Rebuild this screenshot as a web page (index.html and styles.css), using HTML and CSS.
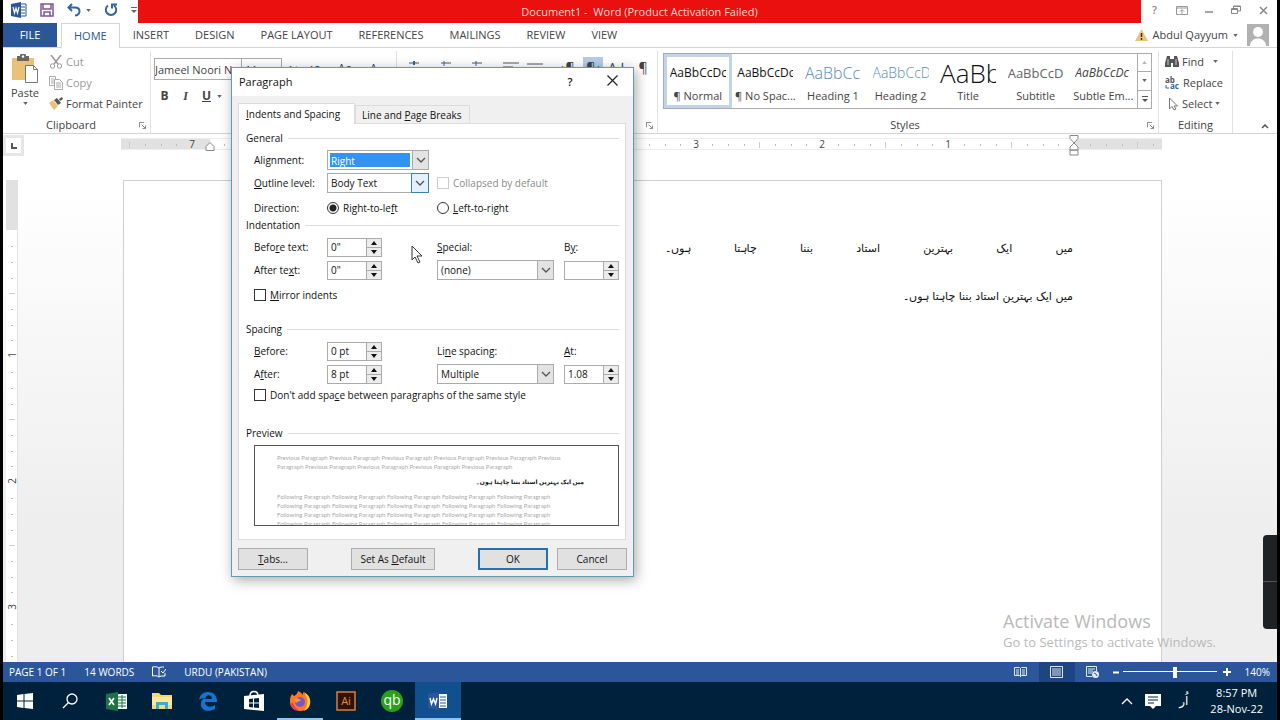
FILE: index.html
```html
<!DOCTYPE html>
<html lang="en">
<head>
  <meta charset="UTF-8">
  <title>Document1 - Word</title>
  <link rel="stylesheet" href="styles.css">
</head>
<body>

  <!-- shared icons -->
  <svg class="defs" width="0" height="0">
    <symbol id="caret" viewBox="0 0 6 4"><path d="M0 0h6L3 4z" fill="#666"/></symbol>
    <symbol id="chevron" viewBox="0 0 10 6"><path d="M1 1l4 4 4-4" fill="none" stroke="#555" stroke-width="1.3"/></symbol>
    <symbol id="launcher" viewBox="0 0 8 8"><path d="M.5 6V.5H6M3 3l4 4M7.500 4v3.500H4" fill="none" stroke="#777"/></symbol>
    <symbol id="up" viewBox="0 0 6 4"><path d="M0 4h6L3 0z" fill="#111"/></symbol>
    <symbol id="down" viewBox="0 0 6 4"><path d="M0 0h6L3 4z" fill="#111"/></symbol>
    <symbol id="ticks" viewBox="0 0 126 12"><path d="M16 6h1M32 6h1M48 6h1M79 6h1M95 6h1M110 6h1" stroke="#bbb" stroke-width="2"/><path d="M63.500 3v6" stroke="#ccc"/></symbol>
  </svg>

  <!-- TITLE BAR -->
  <header class="titlebar">
    <div class="quick">
      <svg width="16" height="16" viewBox="0 0 16 16"><path d="M9 2h6v12H9z" fill="#fff" stroke="#2b579a"/><path d="M10 5h4M10 8h4M10 11h4" stroke="#2b579a"/><path d="M0 2l10-2v16L0 14z" fill="#2b579a"/><path d="M2 5l1.500 6L5 6l1.500 5L8 5" fill="none" stroke="#fff" stroke-width="1.200"/></svg>
      <button aria-label="Save"><svg width="14" height="14" viewBox="0 0 14 14"><path d="M1 1h12v12H1zM3 1v5h8V1M4 13V9h6v4" fill="none" stroke="#80559b" stroke-width="1.500"/></svg></button>
      <button aria-label="Undo"><svg width="14" height="14" viewBox="0 0 14 14"><path d="M5 1L1.500 4.500 5 8M2 4.500h6c6 0 6 7 0 8" fill="none" stroke="#31669f" stroke-width="2"/></svg><svg width="5" height="3"><use href="#caret"/></svg></button>
      <button aria-label="Redo"><svg width="14" height="14" viewBox="0 0 14 14"><path d="M4 2.500a5.200 5.200 0 1 0 6 0M8 5.500V1.500h5" fill="none" stroke="#31669f" stroke-width="2"/></svg></button>
      <button aria-label="Customize"><svg width="6" height="7" viewBox="0 0 6 7"><path d="M0 .5h6" stroke="#666"/><path d="M0 3h6L3 6z" fill="#666"/></svg></button>
    </div>
    <div class="doc-title">Document1 -&nbsp; Word (Product Activation Failed)</div>
    <div class="win-buttons">
      <button aria-label="Help">?</button>
      <button aria-label="Ribbon display"><svg width="12" height="9" viewBox="0 0 12 9"><path d="M.5.5h11v8H.5zM.5 2h11M6 8V4M4 5.500l2-2 2 2" fill="none" stroke="#999"/></svg></button>
      <button aria-label="Minimize"><svg width="8" height="9" viewBox="0 0 8 9"><path d="M0 6h8" stroke="#888" stroke-width="1.500"/></svg></button>
      <button aria-label="Restore"><svg width="10" height="10" viewBox="0 0 10 10"><path d="M.5 3.500h6v5h-6zM.5 4.500h6M2.500 3V1h7v5H7M3 1.500h6" fill="none" stroke="#888"/></svg></button>
      <button aria-label="Close"><svg width="9" height="9" viewBox="0 0 9 9"><path d="M1 1l7 7M8 1L1 8" stroke="#888" stroke-width="1.500"/></svg></button>
    </div>
  </header>

  <!-- TABS -->
  <nav class="tabs">
    <button class="tab file">FILE</button>
    <button class="tab active">HOME</button>
    <button class="tab">INSERT</button>
    <button class="tab">DESIGN</button>
    <button class="tab">PAGE LAYOUT</button>
    <button class="tab">REFERENCES</button>
    <button class="tab">MAILINGS</button>
    <button class="tab">REVIEW</button>
    <button class="tab">VIEW</button>
    <div class="account">
      <svg width="13" height="12" viewBox="0 0 13 12"><path d="M6.500 0L13 12H0z" fill="#efc27a"/><path d="M6.500 4v4M6.500 9v2" stroke="#333" stroke-width="1.500"/></svg>
      <span>Abdul Qayyum</span>
      <svg width="5" height="3"><use href="#caret"/></svg>
      <svg class="avatar" width="22" height="22" viewBox="0 0 22 22"><path d="M0 0h22v22H0z" fill="#b1b1b1"/><circle cx="11" cy="8" r="5" fill="#fff"/><path d="M3 22c0-10 16-10 16 0z" fill="#fff"/></svg>
    </div>
  </nav>

  <!-- RIBBON -->
  <section class="ribbon">
    <div class="group clipboard">
      <div class="group-body">
        <button class="paste">
          <svg width="28" height="30" viewBox="0 0 28 30"><path d="M1 4h22v22H1z" fill="#ebc175"/><path d="M6 2h3a3 3 0 0 1 6 0h3v5H6z" fill="#666"/><circle cx="12" cy="2.500" r="1.200" fill="#fff"/><path d="M14.500 11.500h8l4 4v13h-12zM22.500 11.500v4h4" fill="#fff" stroke="#777"/></svg>
          <span>Paste</span>
          <svg width="5" height="3"><use href="#caret"/></svg>
        </button>
        <div class="stack">
          <button class="cmd off"><svg width="14" height="14" viewBox="0 0 14 14"><path d="M2 0l7 9M12 0L5 9" stroke="#999" stroke-width="1.500"/><circle cx="3.500" cy="11" r="2.200" fill="none" stroke="#999"/><circle cx="10.500" cy="11" r="2.200" fill="none" stroke="#999"/></svg>Cut</button>
          <button class="cmd off"><svg width="14" height="14" viewBox="0 0 14 14"><path d="M.5.5h6v9h-6zM2 3h3M2 5h3M2 7h3" fill="#fff" stroke="#aaa"/><path d="M5.500 3.500h5l3 3v7h-8zM7 7h5M7 9h5M7 11h5" fill="#fff" stroke="#aaa"/></svg>Copy</button>
          <button class="cmd"><svg width="14" height="14" viewBox="0 0 14 14"><path d="M0 6l4-3 5 6-4 4z" fill="#ebc175"/><path d="M5 3l3-2 4 5-3 2zM10 2l3-2 1 2-3 2z" fill="#555"/></svg>Format Painter</button>
        </div>
      </div>
      <div class="group-name"><span>Clipboard</span><button aria-label="Clipboard options"><svg width="7" height="7"><use href="#launcher"/></svg></button></div>
    </div>

    <div class="group font">
      <div class="group-body column">
        <div class="tools">
          <input class="font-name" aria-label="Font" value="Jameel Noori Nastaleeq">
          <input class="font-size" aria-label="Font size" value="11">
          <button class="t">A<sup>▴</sup></button><button class="t">A<sup>▾</sup></button><button class="t wide">Aa</button><button class="t">A<i class="rubber">◆</i></button>
        </div>
        <div class="tools">
          <button class="t"><b>B</b></button><button class="t"><i class="serif">I</i></button><button class="t"><b><u>U</u></b></button><svg width="5" height="3"><use href="#caret"/></svg>
        </div>
      </div>
    </div>

    <div class="group para">
      <div class="group-body">
        <svg width="126" height="22" viewBox="0 0 126 22"><path d="M12 6h10M44 6h10M75 6h10M6 11h16M38 11h16M70 11h16M106 6h16M106 10h10M106 14h16" stroke="#555"/><path d="M16 4h2v4h-2z" fill="#31669f"/><path d="M47 4v5M79 4v5" stroke="#31669f"/></svg>
        <svg width="30" height="22" viewBox="0 0 30 22"><path d="M4 7h16M4 11h10M4 15h16" stroke="#555"/></svg>
        <span class="mark">›¶</span><span class="mark on">¶‹</span><span class="mark">A↓</span><span class="mark">¶</span>
      </div>
      <div class="group-name"><span></span><button aria-label="Paragraph options"><svg width="7" height="7"><use href="#launcher"/></svg></button></div>
    </div>

    <div class="group styles">
      <div class="gallery">
        <button class="style chosen"><span class="sample">AaBbCcDc</span><span>¶ Normal</span></button>
        <button class="style"><span class="sample">AaBbCcDc</span><span>¶ No Spac...</span></button>
        <button class="style"><span class="sample h1">AaBbCc</span><span>Heading 1</span></button>
        <button class="style"><span class="sample h2">AaBbCcD</span><span>Heading 2</span></button>
        <button class="style"><span class="sample big">AaBb</span><span>Title</span></button>
        <button class="style"><span class="sample sub">AaBbCcD</span><span>Subtitle</span></button>
        <button class="style"><span class="sample em">AaBbCcDc</span><span>Subtle Em...</span></button>
        <div class="scroll">
          <button aria-label="Row up" disabled><svg width="5" height="3"><use href="#up"/></svg></button>
          <button aria-label="Row down"><svg width="5" height="3"><use href="#caret"/></svg></button>
          <button aria-label="More styles"><svg width="6" height="7" viewBox="0 0 6 7"><path d="M0 .5h6" stroke="#555"/><path d="M0 3h6L3 6z" fill="#555"/></svg></button>
        </div>
      </div>
      <div class="group-name"><span>Styles</span><button aria-label="Styles options"><svg width="7" height="7"><use href="#launcher"/></svg></button></div>
    </div>

    <div class="group editing">
      <div class="group-body">
        <div class="stack">
          <button class="cmd"><svg width="14" height="13" viewBox="0 0 14 13"><path d="M2 1h3v3h4V1h3l2 7v4H8V8H6v4H0V8z" fill="#555"/><path d="M3 4v6M11 4v6" stroke="#ccc"/></svg>Find<svg class="gap" width="5" height="3"><use href="#caret"/></svg></button>
          <button class="cmd"><svg width="15" height="14" viewBox="0 0 15 14"><text x="0" y="7" font-size="8" font-weight="700" fill="#555">ab</text><text x="5" y="13" font-size="8" font-weight="700" fill="#31669f">ac</text><path d="M1 9v3h3" fill="none" stroke="#31669f"/></svg>Replace</button>
          <button class="cmd"><svg width="14" height="14" viewBox="0 0 14 14"><path d="M4.500 1v11l2.500-2.500L9 13l2-1-2-3h3.500z" fill="#fff" stroke="#777"/></svg>Select<svg width="5" height="3"><use href="#caret"/></svg></button>
        </div>
      </div>
      <div class="group-name"><span>Editing</span></div>
    </div>
    <button class="collapse" aria-label="Collapse ribbon"><svg width="8" height="5" viewBox="0 0 8 5"><path d="M1 4l3-3 3 3" fill="none" stroke="#555" stroke-width="1.500"/></svg></button>
  </section>

  <!-- DOCUMENT -->
  <main class="workspace">
    <div class="ruler-row">
      <button class="tab-stop" aria-label="Tab stop"><svg width="6" height="6" viewBox="0 0 6 6"><path d="M1 0v5h5" fill="none" stroke="#555" stroke-width="2"/></svg></button>
      <div class="ruler">
        <div class="cap"><svg width="126" height="12"><use href="#ticks"/></svg></div>
        <svg width="126" height="12"><use href="#ticks"/><text x="0" y="9">1</text></svg>
        <svg width="126" height="12"><use href="#ticks"/><text x="0" y="9">2</text></svg>
        <svg width="126" height="12"><use href="#ticks"/><text x="0" y="9">3</text></svg>
        <svg width="126" height="12"><use href="#ticks"/><text x="0" y="9">4</text></svg>
        <svg width="126" height="12"><use href="#ticks"/><text x="0" y="9">5</text></svg>
        <svg width="126" height="12"><use href="#ticks"/><text x="0" y="9">6</text></svg>
        <svg width="126" height="12"><use href="#ticks"/><text x="0" y="9">7</text></svg>
        <div class="rest"><svg width="126" height="12"><use href="#ticks"/></svg></div>
        <svg class="marker left" width="10" height="9" viewBox="0 0 10 9"><path d="M5 .5l4 4v4H1v-4z" fill="#fff" stroke="#888"/></svg>
        <svg class="marker right" width="10" height="21" viewBox="0 0 10 21"><path d="M1 .5h8v3L5 8 1 3.500zM5 8l4 4v3H1v-3zM1 15h8v5H1z" fill="#fff" stroke="#888"/></svg>
      </div>
    </div>
    <div class="canvas">
      <div class="v-ruler">
        <div class="v-cap"></div>
        <svg width="12" height="126" viewBox="0 0 12 126"><use href="#ticks" width="126" height="12" transform="rotate(90) translate(0 -12)"/><text transform="translate(10 125) rotate(-90)">1</text></svg>
        <svg width="12" height="126" viewBox="0 0 12 126"><use href="#ticks" width="126" height="12" transform="rotate(90) translate(0 -12)"/><text transform="translate(10 125) rotate(-90)">2</text></svg>
        <svg width="12" height="126" viewBox="0 0 12 126"><use href="#ticks" width="126" height="12" transform="rotate(90) translate(0 -12)"/><text transform="translate(10 125) rotate(-90)">3</text></svg>
        <svg width="12" height="126" viewBox="0 0 12 126"><use href="#ticks" width="126" height="12" transform="rotate(90) translate(0 -12)"/></svg>
      </div>
      <article class="page" lang="ur" dir="rtl">
        <p class="spread"><span>میں</span> <span>ایک</span> <span>بہترین</span> <span>استاد</span> <span>بننا</span> <span>چاہتا</span> <span>ہوں۔</span></p>
        <p>میں ایک بہترین استاد بننا چاہتا ہوں۔</p>
      </article>
    </div>
    <div class="watermark"><strong>Activate Windows</strong><span>Go to Settings to activate Windows.</span></div>
    <div class="side-handle"></div>
  </main>

  <!-- STATUS BAR -->
  <footer class="status">
    <span>PAGE 1 OF 1</span>
    <span>14 WORDS</span>
    <svg width="14" height="12" viewBox="0 0 14 12"><path d="M7 2C5 .5 3 .5.500 1v9c2.500-.5 4.500-.5 6.500 1V2c1-1 3-1 5-1M7 11c1-1 3-1 6-1V7M9 5l2 2 3-4" fill="none" stroke="#fff"/></svg>
    <span>URDU (PAKISTAN)</span>
    <div class="views">
      <button aria-label="Read mode"><svg width="13" height="12" viewBox="0 0 13 12"><path d="M.5 1.500h5l1 1 1-1h5v8h-5l-1 1-1-1h-5zM6.500 2v9M2 4h3M2 6h3M2 8h3M8 4h3M8 6h3M8 8h3" fill="none" stroke="#dfe8f5"/></svg></button>
      <button class="on" aria-label="Print layout"><svg width="13" height="12" viewBox="0 0 13 12"><path d="M.5.5h12v11H.5zM2 3h9M2 5h9M2 7h9M2 9h9" fill="none" stroke="#dfe8f5"/></svg></button>
      <button aria-label="Web layout"><svg width="13" height="12" viewBox="0 0 13 12"><path d="M6 10.500H.5V.5h10V5M2 3h7M2 5h5M2 7h4" fill="none" stroke="#dfe8f5"/><circle cx="9.500" cy="8.500" r="3.500" fill="#dfe8f5"/><path d="M8 7l2 1 1 2" stroke="#2b579a" fill="none"/></svg></button>
    </div>
    <div class="zoom">
      <button aria-label="Zoom out"><svg width="7" height="7" viewBox="0 0 7 7"><path d="M0 3.500h6" stroke="#fff" stroke-width="2"/></svg></button>
      <input type="range" aria-label="Zoom" min="0" max="100" value="56">
      <button aria-label="Zoom in"><svg width="8" height="8" viewBox="0 0 8 8"><path d="M0 4h8M4 0v8" stroke="#fff" stroke-width="2"/></svg></button>
      <span>140%</span>
    </div>
  </footer>

  <!-- TASKBAR -->
  <div class="taskbar">
    <button aria-label="Start"><svg width="16" height="16" viewBox="0 0 16 16"><path d="M0 2l6.500-1v6.500H0zM7.500 1L16 0v7.500H7.500zM0 8.500h6.500V15L0 14zM7.500 8.500H16V16l-8.500-1z" fill="#fff"/></svg></button>
    <button aria-label="Search"><svg width="16" height="16" viewBox="0 0 16 16"><circle cx="10" cy="6" r="5" fill="none" stroke="#fff" stroke-width="1.300"/><path d="M6.500 9.500L1 15" stroke="#fff" stroke-width="1.300"/></svg></button>
    <button aria-label="Excel"><svg width="21" height="19" viewBox="0 0 21 19"><path d="M11 2h10v15H11z" fill="#f4fff7"/><path d="M12 5h8M12 8h8M12 11h8M12 14h8M16 3v13" stroke="#1e7245"/><path d="M0 2l12-2v19L0 17z" fill="#1e7245"/><path d="M3 6l5 7M8 6l-5 7" stroke="#fff" stroke-width="1.700"/></svg></button>
    <button aria-label="File Explorer"><svg width="20" height="18" viewBox="0 0 20 18"><path d="M0 1h7l2 2h11v14H0z" fill="#f6d77b"/><path d="M0 5h20v8H0z" fill="#fbe7a0"/><path d="M4 10h12v7h-3v-4H7v4H4z" fill="#38aecb"/></svg></button>
    <button aria-label="Edge"><svg width="20" height="20" viewBox="0 0 20 20"><path d="M1 9C2 3 6 1 10 1c6 0 9 4 9 10H7c0 5 6 6 10 3v4C10 22 2 19 3 12c.3-3 2-4 4-5 0 0-4 0-6 2zm6-1h7c0-5-6-5-7 0z" fill="#1275d0"/></svg></button>
    <button aria-label="Store"><svg width="20" height="22" viewBox="0 0 20 22"><path d="M6 6c0-6 8-6 8 0" fill="none" stroke="#fff" stroke-width="1.500"/><path d="M0 6l20-2v17L0 19z" fill="#fff"/><path d="M5 9l4-.5v4H5zM10 8.500l5-.5v4.500h-5zM5 13.500h4v4L5 17zM10 13.500h5V18l-5-.5z" fill="#00213b"/></svg></button>
    <button class="running" aria-label="Firefox"><svg width="22" height="22" viewBox="0 0 22 22"><path d="M3 4l2 2c2-1 3-2 4-5 3 1 4 3 5 4V2c5 3 7 7 7 11 0 5-4 8-10 8S1 17 1 12c0-3 0-5 2-8z" fill="#ff7a26"/><path d="M15 2c5 3 7 7 6 12-1 4-4 6-6 7 5-7 4-13 0-19z" fill="#ffcf35"/><path d="M2 13c0 5 5 8 10 8-4-1-7-4-8-8z" fill="#ef3159"/><circle cx="11" cy="12" r="5" fill="#7657c9"/><path d="M5 9c3-2 5 0 7 1-1 2-4 1-5 3z" fill="#ff9a30"/></svg></button>
    <button aria-label="Illustrator"><svg width="20" height="20" viewBox="0 0 20 20"><path d="M1 1h18v18H1z" fill="#2f130a" stroke="#d5803e" stroke-width="1.500"/><text x="10" y="14" text-anchor="middle" font-size="11" fill="#e78b3f">Ai</text></svg></button>
    <button aria-label="QuickBooks"><svg width="22" height="22" viewBox="0 0 22 22"><circle cx="11" cy="11" r="11" fill="#2ca01c"/><text x="11" y="15" text-anchor="middle" font-size="14" fill="#fff">qb</text></svg></button>
    <button class="running current" aria-label="Word"><svg width="20" height="18" viewBox="0 0 20 18"><path d="M11 2h8v14h-8z" fill="#fff"/><path d="M12 5h6M12 8h6M12 11h6M12 14h6" stroke="#2b579a"/><path d="M0 2l11-2v18L0 16z" fill="#2b579a"/><path d="M2 6l1.500 6L5.500 7l2 5L9 6" fill="none" stroke="#fff" stroke-width="1.400"/></svg></button>
    <div class="tray">
      <svg width="12" height="7" viewBox="0 0 12 7"><path d="M1 6l5-5 5 5" fill="none" stroke="#fff" stroke-width="1.300"/></svg>
      <svg width="16" height="16" viewBox="0 0 16 16"><path d="M0 1h16v12h-5l-3 3-3-3H0z" fill="#fff"/><path d="M3 4h10M3 7h10M3 10h6" stroke="#00213b"/></svg>
      <span class="lang" lang="ur">اُر</span>
      <div class="clock"><span>8:57 PM</span><span>28-Nov-22</span></div>
    </div>
  </div>

  <!-- PARAGRAPH DIALOG -->
  <form class="dialog" role="dialog" aria-label="Paragraph" onsubmit="return false">
    <div class="dialog-title">
      <span>Paragraph</span>
      <button type="button" aria-label="Help">?</button>
      <button type="button" aria-label="Close"><svg width="11" height="11" viewBox="0 0 11 11"><path d="M.5.5l10 10M10.500.5l-10 10" stroke="#222" stroke-width="1.200"/></svg></button>
    </div>
    <div class="dialog-tabs">
      <button type="button" class="dtab active"><u>I</u>ndents and Spacing</button>
      <button type="button" class="dtab">Line and <u>P</u>age Breaks</button>
    </div>
    <div class="panel">
      <h2>General</h2>
      <div class="rows">
        <label for="align">Ali<u>g</u>nment:</label>
        <div class="combo focused"><select id="align"><option>Right</option></select><span class="arrow"><svg width="10" height="6"><use href="#chevron"/></svg></span></div>
        <label for="outline" class="first"><u>O</u>utline level:</label>
        <div class="combo hover"><select id="outline"><option>Body Text</option></select><span class="arrow"><svg width="10" height="6"><use href="#chevron"/></svg></span></div>
        <label class="check off"><input type="checkbox" disabled>Collapsed by default</label>
        <span class="first direction">Direction:</span>
        <label class="check direction"><input type="radio" name="dir" checked><span>Right-to-le<u>f</u>t</span></label>
        <label class="check direction"><input type="radio" name="dir"><span><u>L</u>eft-to-right</span></label>
      </div>

      <h2>Indentation</h2>
      <div class="rows">
        <label for="before-text">Befo<u>r</u>e text:</label>
        <div class="spin"><input id="before-text" value='0"'><span class="steps"><button type="button" aria-label="Up"><svg width="6" height="4"><use href="#up"/></svg></button><button type="button" aria-label="Down"><svg width="6" height="4"><use href="#down"/></svg></button></span></div>
        <label for="special"><u>S</u>pecial:</label>
        <label for="by">B<u>y</u>:</label>
        <label for="after-text">After te<u>x</u>t:</label>
        <div class="spin"><input id="after-text" value='0"'><span class="steps"><button type="button" aria-label="Up"><svg width="6" height="4"><use href="#up"/></svg></button><button type="button" aria-label="Down"><svg width="6" height="4"><use href="#down"/></svg></button></span></div>
        <div class="combo"><select id="special"><option>(none)</option></select><span class="arrow"><svg width="10" height="6"><use href="#chevron"/></svg></span></div>
        <div class="spin"><input id="by" value=""><span class="steps"><button type="button" aria-label="Up"><svg width="6" height="4"><use href="#up"/></svg></button><button type="button" aria-label="Down"><svg width="6" height="4"><use href="#down"/></svg></button></span></div>
      </div>
      <label class="check line mirror"><input type="checkbox"><span><u>M</u>irror indents</span></label>

      <h2>Spacing</h2>
      <div class="rows">
        <label for="before"><u>B</u>efore:</label>
        <div class="spin"><input id="before" value="0 pt"><span class="steps"><button type="button" aria-label="Up"><svg width="6" height="4"><use href="#up"/></svg></button><button type="button" aria-label="Down"><svg width="6" height="4"><use href="#down"/></svg></button></span></div>
        <label for="line-spacing">Li<u>n</u>e spacing:</label>
        <label for="at"><u>A</u>t:</label>
        <label for="after">A<u>f</u>ter:</label>
        <div class="spin"><input id="after" value="8 pt"><span class="steps"><button type="button" aria-label="Up"><svg width="6" height="4"><use href="#up"/></svg></button><button type="button" aria-label="Down"><svg width="6" height="4"><use href="#down"/></svg></button></span></div>
        <div class="combo"><select id="line-spacing"><option>Multiple</option></select><span class="arrow"><svg width="10" height="6"><use href="#chevron"/></svg></span></div>
        <div class="spin"><input id="at" value="1.08"><span class="steps"><button type="button" aria-label="Up"><svg width="6" height="4"><use href="#up"/></svg></button><button type="button" aria-label="Down"><svg width="6" height="4"><use href="#down"/></svg></button></span></div>
      </div>
      <label class="check line same"><input type="checkbox"><span>Don't add spa<u>c</u>e between paragraphs of the same style</span></label>

      <h2>Preview</h2>
      <div class="preview">
        <p>Previous Paragraph Previous Paragraph Previous Paragraph Previous Paragraph Previous Paragraph Previous<br>Paragraph Previous Paragraph Previous Paragraph Previous Paragraph Previous Paragraph</p>
        <p class="current-par" lang="ur" dir="rtl">میں ایک بہترین استاد بننا چاہتا ہوں۔</p>
        <p>Following Paragraph Following Paragraph Following Paragraph Following Paragraph Following Paragraph<br>Following Paragraph Following Paragraph Following Paragraph Following Paragraph Following Paragraph<br>Following Paragraph Following Paragraph Following Paragraph Following Paragraph Following Paragraph<br>Following Paragraph Following Paragraph Following Paragraph Following Paragraph Following Paragraph</p>
      </div>
    </div>
    <div class="dialog-buttons">
      <button type="button"><u>T</u>abs...</button>
      <button type="button" class="set-default">Set As <u>D</u>efault</button>
      <button type="submit" class="ok">OK</button>
      <button type="button">Cancel</button>
    </div>
  </form>

  <svg class="pointer" width="12" height="19" viewBox="0 0 12 19"><path d="M1 1v14l3-3 3 6 2-1-3-6h5z" fill="#fff" stroke="#333"/></svg>

</body>
</html>
```
FILE: styles.css
```css
* { box-sizing: border-box; }
body {
  margin: 0; padding: 0 3px; height: 100vh; overflow: hidden;
  display: flex; flex-direction: column;
  background: #000; color: #444;
  font: 11px/16px "Open Sans", "DejaVu Sans", sans-serif;
}
button, input, select { font: inherit; color: inherit; margin: 0; padding: 0; }
button { background: none; border: 0; }
svg { flex: none; }
.defs { position: absolute; }

/* title bar */
.titlebar { display: flex; height: 23px; background: #fff; }
.quick { display: flex; align-items: center; gap: 13px; width: 135px; padding: 0 3px 3px 8px; }
.quick button { display: flex; align-items: center; gap: 5px; }
.doc-title { flex: 1; background: #ea1010; color: #fbd5d0; text-align: center; line-height: 23px; }
.win-buttons { display: flex; width: 136px; padding-bottom: 3px; color: #888; }
.win-buttons button { flex: 1; display: flex; align-items: center; justify-content: center; font-weight: 600; }

/* tabs */
.tabs { display: flex; height: 25px; background: #fff; border-bottom: 1px solid #d5d5d5; }
.tab { padding: 0 13px; }
.file { width: 54px; margin-right: 4px; background: #2b579a; color: #fff; }
.tab.active { background: #fff; color: #2b579a; border: 1px solid #d5d5d5; border-bottom: 0; margin-bottom: -1px; padding: 0 12px; }
.account { margin-left: auto; display: flex; align-items: center; gap: 5px; padding-right: 8px; }
.avatar { margin-left: 4px; }

/* ribbon */
.ribbon { display: flex; height: 86px; background: #fff; border-bottom: 1px solid #d5d5d5; padding-top: 3px; }
.group { display: flex; flex-direction: column; border-right: 1px solid #e1e1e1; }
.group-body { flex: 1; display: flex; }
.group-name { display: flex; justify-content: center; height: 16px; padding-right: 4px; }
.group-name span { flex: 1; text-align: center; }
.group-name button { display: flex; align-items: center; }
.clipboard { width: 148px; }
.paste { width: 44px; display: flex; flex-direction: column; align-items: center; gap: 1px; padding-top: 3px; }
.stack { display: flex; flex-direction: column; }
.cmd { display: flex; align-items: center; gap: 3px; height: 21px; padding-left: 2px; white-space: nowrap; }
.cmd.off { color: #999; }
.cmd .gap { margin-left: 6px; }
.font { width: 246px; }
.column { flex-direction: column; gap: 8px; padding: 7px 0 0 3px; }
.tools { display: flex; align-items: center; }
.font-name { width: 88px; height: 22px; border: 1px solid #ababab; }
.font-size { width: 40px; height: 22px; border: 1px solid #ababab; border-left: 0; padding-left: 3px; }
.t { width: 21px; font-size: 12px; }
.t.wide { width: 42px; }
.t sup { font-size: 8px; color: #31669f; }
.rubber { color: #c78cae; font-size: 8px; }
.serif { font-family: "Liberation Serif", serif; font-weight: 700; }
.para { width: 261px; }
.para .group-body { padding-top: 6px; }
.mark { width: 20px; height: 22px; padding-top: 3px; text-align: center; font-size: 14px; margin-left: 5px; }
.mark.on { background: #b5cbe8; }
.styles { flex: 1; padding-left: 5px; }
.gallery { display: flex; height: 56px; margin: 2px 6px auto 0; border: 1px solid #ababab; }
.style { flex: 1; min-width: 0; display: flex; flex-direction: column; justify-content: flex-end; align-items: center; white-space: nowrap; padding-bottom: 4px; }
.style.chosen { box-shadow: inset 0 0 0 3px #c3d3ea; }
.sample { display: block; width: 56px; height: 30px; line-height: 30px; overflow: hidden; text-align: left; font-size: 12px; color: #111; }
.sample.h1 { font-size: 16px; color: #5b8bb5; font-weight: 300; }
.sample.h2 { font-size: 14px; color: #5b8bb5; font-weight: 300; }
.sample.big { font-size: 26px; font-weight: 300; }
.sample.sub { font-size: 13px; color: #666; }
.sample.em { font-style: italic; color: #444; }
.scroll { width: 14px; display: flex; flex-direction: column; border-left: 1px solid #ababab; }
.scroll button { flex: 1; display: flex; align-items: center; justify-content: center; }
.scroll button + button { border-top: 1px solid #ababab; }
.scroll button:disabled { opacity: .3; }
.editing { width: 74px; padding-left: 4px; }
.collapse { width: 44px; align-self: flex-end; padding-left: 20px; }

/* workspace */
.workspace { flex: 1; min-height: 0; position: relative; display: flex; flex-direction: column; background: linear-gradient(#fff 10%, #eee 75%); }
.ruler-row { display: flex; height: 46px; }
.tab-stop { flex: none; width: 21px; height: 21px; display: flex; align-items: center; justify-content: center; background: #fff; border: 3px solid #e6e6e6; margin: 1px 97px 0 0; }
.ruler {
  flex: 1; min-width: 0; height: 12px; margin: 4px 115px 0 0; position: relative;
  display: flex; flex-direction: row-reverse; font-size: 10px;
  background: linear-gradient(to right, #e1e1e1 89px, #fff 89px); border-bottom: 1px solid #eee; border-top: 1px solid #eee;
}
.ruler svg { overflow: visible; }
.ruler text, .v-ruler text { fill: #444; text-anchor: middle; }
.cap { width: 88px; flex: none; overflow: hidden; background: #e1e1e1; }
.rest { flex: 1; min-width: 0; display: flex; flex-direction: row-reverse; overflow: hidden; }
.marker { position: absolute; }
.marker.left { left: 84px; top: 3px; }
.marker.right { right: 83px; top: -4px; }
.canvas { flex: 1; min-height: 0; display: flex; overflow: hidden; }
.v-ruler { width: 12px; margin: -2px 105px 0 3px; background: #fff; border-right: 1px solid #e1e1e1; font-size: 10px; }
.v-ruler svg { display: block; overflow: visible; }
.v-cap { height: 52px; background: #e1e1e1; }
.page { flex: 1; margin-right: 115px; background: #fff; border: 1px solid #cfcfcf; border-bottom: 0; padding: 55px 88px 0; color: #111; font: 11px/26px "DejaVu Sans", sans-serif; }
.page p { margin: 0 0 22px; }
.spread { display: flex; justify-content: space-between; max-width: 408px; }
.watermark { position: absolute; right: 53px; bottom: 10px; min-width: 221px; display: flex; flex-direction: column; color: #b9b9b9; font-size: 13px; line-height: 20px; }
.watermark strong { font-size: 18px; font-weight: 400; line-height: 22px; }
.side-handle { position: absolute; right: 0; bottom: 33px; width: 14px; height: 94px; background: linear-gradient(#1f2224 49%, #555 49%, #555 50%, #1f2224 50%); border-radius: 4px 0 0 4px; }

/* status bar */
.status { display: flex; align-items: center; gap: 18px; height: 20px; padding-left: 6px; background: #2b579a; color: #fff; font-size: 10px; }
.views { margin-left: auto; display: flex; height: 20px; }
.views button { width: 36px; display: flex; align-items: center; justify-content: center; }
.views .on { background: #1e4583; }
.zoom { display: flex; align-items: center; gap: 3px; padding-right: 7px; margin-left: -16px; }
.zoom button { display: flex; }
.zoom span { margin-left: 11px; }
.zoom input { appearance: none; width: 94px; height: 12px; margin: 0 3px 0 0; background: linear-gradient(transparent 5px, #fff 5px, #fff 6px, transparent 6px); }
.zoom input::-webkit-slider-thumb { appearance: none; width: 4px; height: 11px; background: #fff; }

/* taskbar */
.taskbar { display: flex; height: 38px; background: #00213b; color: #fff; }
.taskbar > button { width: 46px; display: flex; align-items: center; justify-content: center; border-top: 2px solid transparent; border-bottom: 2px solid transparent; }
.taskbar > button:first-child { width: 44px; }
.taskbar .running { border-bottom-color: #8fc3f0; }
.taskbar .current { background: #10508f; }
.tray { margin-left: auto; display: flex; align-items: center; gap: 12px; padding-right: 14px; }
.lang { font-size: 12px; padding: 0 10px 0 6px; }
.clock { display: flex; flex-direction: column; text-align: center; }

/* paragraph dialog */
.dialog {
  position: absolute; left: 231px; top: 67px; width: 403px;
  background: #f0f0f0; border: 1px solid #5f9ab8; color: #111;
  box-shadow: 2px 3px 12px rgba(0, 0, 0, .35); font-size: 10px;
}
.dialog-title { display: flex; align-items: center; height: 28px; padding-left: 7px; background: #fff; font-size: 11px; }
.dialog-title span { flex: 1; }
.dialog-title button { width: 42px; height: 28px; font-weight: 600; }
.dialog-tabs { display: flex; align-items: flex-end; padding: 7px 6px 0; }
.dtab { width: 115px; height: 18px; padding: 0 6px; border: 1px solid #dcdcdc; border-bottom: 0; text-align: left; white-space: nowrap; }
.dtab.active { width: 117px; height: 21px; padding: 0 7px; background: #fff; margin-bottom: -1px; position: relative; }
.panel { margin: 0 7px 0 6px; padding: 6px 6px 13px 7px; background: #fff; border: 1px solid #dcdcdc; }
.panel h2 { display: flex; align-items: center; gap: 5px; margin: 0; font-size: 10px; font-weight: 400; line-height: 16px; }
.panel h2::after { content: ""; flex: 1; height: 1px; background: #dcdcdc; }
.rows { display: grid; grid-template-columns: 65px 102px 119px 1fr; column-gap: 8px; row-gap: 1px; grid-auto-rows: 22px; align-items: center; padding: 3px 0 0 8px; white-space: nowrap; }
.first { grid-column: 1; }
.direction { margin-top: 4px; }
.combo { display: flex; height: 20px; border: 1px solid #ababab; background: #fff; margin-right: 2px; }
.combo.focused, .combo.hover { margin-right: 0; }
.combo select { flex: 1; min-width: 0; appearance: none; border: 0; background: none; padding: 0 3px; outline: 0; }
.combo.focused select { background: #3393f3; color: #fff; margin: 2px; padding: 0 1px; }
.arrow { width: 16px; display: flex; align-items: center; justify-content: center; background: #e3e3e3; border-left: 1px solid #ababab; }
.hover .arrow { background: #e1f0fb; outline: 1px solid #3c7fb1; border: 0; }
.spin { display: flex; width: 55px; height: 19px; border: 1px solid #ababab; background: #fff; }
.spin input { flex: 1; min-width: 0; border: 0; padding-left: 3px; outline: 0; background: none; }
.steps { width: 15px; display: flex; flex-direction: column; }
.steps button { flex: 1; display: flex; align-items: center; justify-content: center; background: #ececec; border-left: 1px solid #ababab; }
.steps button + button { border-top: 1px solid #ababab; }
.check { display: flex; align-items: center; white-space: nowrap; }
.check input { appearance: none; flex: none; width: 12px; height: 12px; border: 1px solid #333; background: #fff; margin-right: 4px; }
.check input[type="radio"] { border-radius: 50%; }
.check input[type="radio"]:checked { background: radial-gradient(#222 3px, #fff 4px); }
.check.off { color: #8a8a8a; }
.check.off input { border-color: #ccc; }
.line { height: 22px; padding-left: 8px; }
.mirror { margin: 3px 0 15px; }
.same { height: 20px; margin-bottom: 20px; }
.preview { height: 81px; margin: 4px 0 0 8px; padding: 7px 22px 0; border: 1px solid #555; overflow: hidden; color: #aaa; font: 6px/9px Lato, "DejaVu Sans", sans-serif; white-space: nowrap; }
.preview p { margin: 0; }
.preview .current-par { margin: 6px 12px; color: #111; font-weight: 700; }
.dialog-buttons { display: flex; gap: 9px; padding: 8px 6px 6px; }
.dialog-buttons button { width: 70px; height: 22px; background: #e1e1e1; border: 1px solid #adadad; }
.dialog-buttons .set-default { width: 84px; margin: 0 auto; }
.dialog-buttons .ok { border: 2px solid #1f72b5; }
.pointer { position: absolute; left: 411px; top: 245px; }
```
